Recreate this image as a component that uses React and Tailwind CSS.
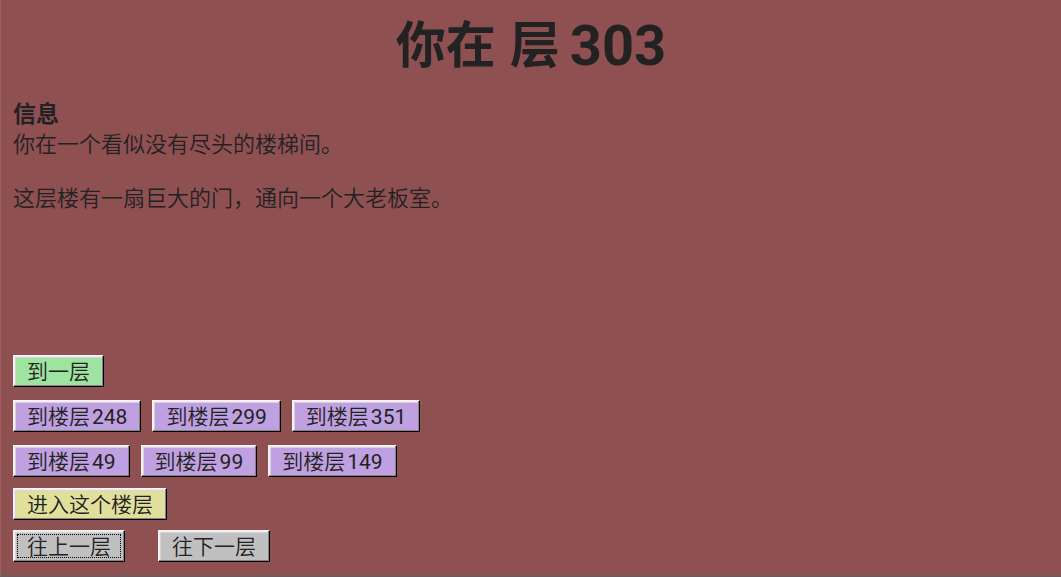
import clsx from 'clsx';

const INFO = ['你在一个看似没有尽头的楼梯间。', '这层楼有一扇巨大的门，通向一个大老板室。'];

const FLOOR_ROWS = [
  [248, 299, 351],
  [49, 99, 149],
];

const COLORS = {
  green: 'bg-[#9fe3a1]',
  purple: 'bg-[#bfa0e0]',
  yellow: 'bg-[#e1df9c]',
  gray: 'bg-[#c0c0c0]',
};

function RetroButton({ color, focused, children }) {
  return (
    <button
      type="button"
      className={clsx(
        'relative h-8 border border-t-[#fff4f4] border-l-[#fff4f4] border-r-black border-b-black px-[13px] pt-px text-[21px] leading-7 whitespace-nowrap',
        'shadow-[inset_-1px_-1px_0_#85808a,inset_1px_1px_0_#f4eef4,inset_2px_2px_0_#d8d2dc]',
        COLORS[color]
      )}
    >
      {children}
      {focused && <span className="pointer-events-none absolute inset-[3px] border border-dotted border-black" />}
    </button>
  );
}

export default function App() {
  return (
    <div className="flex min-h-screen flex-col border-b-2 border-l border-b-[#6b5b60] border-l-[#9c6263] bg-[#8f5052] px-3 text-[#222222] font-['Roboto','Noto_Sans_CJK_SC',sans-serif]">
      <h1 className="mt-2 flex h-[76px] items-center justify-center gap-3.5 text-[50px] leading-none font-bold">
        <span>你在</span>
        <span>层</span>
        <span className="-ml-1 text-[56px]">303</span>
      </h1>

      <section className="mt-4 text-[22px] leading-[30px]">
        <h2 className="text-[23px] font-bold">信息</h2>
        <p className="font-[350]">{INFO[0]}</p>
        <p className="mt-6 font-[350]">{INFO[1]}</p>
      </section>

      <div className="mt-auto flex flex-col items-start pb-[13px] font-[350]">
        <RetroButton color="green">到一层</RetroButton>
        {FLOOR_ROWS.map((row) => (
          <div key={row[0]} className="mt-[13px] flex gap-[11px]">
            {row.map((floor) => (
              <RetroButton key={floor} color="purple">
                到楼层<span className="ml-0.5 font-normal">{floor}</span>
              </RetroButton>
            ))}
          </div>
        ))}
        <div className="mt-[11px]">
          <RetroButton color="yellow">进入这个楼层</RetroButton>
        </div>
        <div className="mt-[10px] flex gap-[33px]">
          <RetroButton color="gray" focused>往上一层</RetroButton>
          <RetroButton color="gray">往下一层</RetroButton>
        </div>
      </div>
    </div>
  );
}
